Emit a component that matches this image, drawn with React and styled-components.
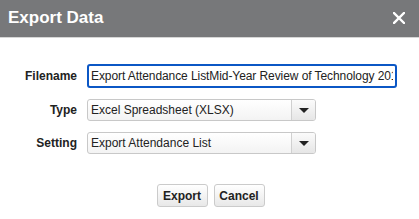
import React from 'react';
import styled, { createGlobalStyle } from 'styled-components';

const Global = createGlobalStyle`
body {
    margin: 0;
    background: #fff;
    font-family: "Liberation Sans", Arial, sans-serif;
}
`
const Dialog = styled.div`
width: 419px;
height: 219px;
background: #fff;
`
const Header = styled.div`
box-sizing: border-box;
display: flex;
justify-content: space-between;
align-items: center;
height: 38px;
padding: 0 14px 1px 8px;
background: #77787a;
border-bottom: 1px solid #d6d6d6;
`
const Title = styled.div`
color: #fff;
font-size: 17px;
font-weight: bold;
`
const Close = styled.button`
display: flex;
padding: 0;
border: none;
background: none;
cursor: pointer;
`
const Form = styled.div`
display: grid;
grid-template-columns: 77px auto;
column-gap: 10px;
row-gap: 11px;
align-items: center;
justify-items: start;
padding-top: 26px;
`
const Label = styled.label`
justify-self: end;
font-size: 12px;
font-weight: bold;
color: #222;
`
const Input = styled.input`
box-sizing: border-box;
width: 310px;
height: 24px;
padding: 0 2px;
border: 2px solid #0b57c5;
border-radius: 3px;
font-family: inherit;
font-size: 12px;
letter-spacing: -0.08px;
color: #222;
outline: none;
`
const SelectBox = styled.div`
box-sizing: border-box;
display: flex;
width: 229px;
height: 22px;
border: 1px solid #c8c8c8;
border-radius: 3px;
background: linear-gradient(#ffffff, #f3f3f3);
overflow: hidden;
`
const SelectText = styled.div`
flex: 1;
padding: 0 3px;
line-height: 20px;
font-size: 12px;
color: #222;
`
const Arrow = styled.div`
display: flex;
align-items: center;
justify-content: center;
width: 23px;
border-left: 1px solid #d0d0d0;
background: linear-gradient(#fbfbfb, #e6e6e6);
&::after {
    content: '';
    border-left: 5px solid transparent;
    border-right: 5px solid transparent;
    border-top: 5px solid #222;
}
`
const Buttons = styled.div`
display: flex;
justify-content: center;
gap: 6px;
margin-top: 30px;
padding-left: 2px;
`
const Button = styled.button`
box-sizing: border-box;
width: ${p => p.$w}px;
height: 23px;
padding: 0;
border: 1px solid #cbcbcb;
border-radius: 3px;
background: linear-gradient(#ffffff, #e8e8e8);
font-family: inherit;
font-size: 12px;
font-weight: bold;
color: #222;
`

const Select = ({ value }) => (
    <SelectBox>
        <SelectText>{value}</SelectText>
        <Arrow />
    </SelectBox>
)

const App = () => {
    return (
        <Dialog>
            <Global />
            <Header>
                <Title>Export Data</Title>
                <Close aria-label="Close">
                    <svg width="12" height="12" viewBox="0 0 12 12">
                        <path d="M1 1L11 11M11 1L1 11" stroke="#fff" strokeWidth="2.4" strokeLinecap="square" />
                    </svg>
                </Close>
            </Header>
            <Form>
                <Label>Filename</Label>
                <Input defaultValue="Export Attendance ListMid-Year Review of Technology 2017" />
                <Label>Type</Label>
                <Select value="Excel Spreadsheet (XLSX)" />
                <Label>Setting</Label>
                <Select value="Export Attendance List" />
            </Form>
            <Buttons>
                <Button $w={51}>Export</Button>
                <Button $w={51}>Cancel</Button>
            </Buttons>
        </Dialog>
    )
}

export default App
